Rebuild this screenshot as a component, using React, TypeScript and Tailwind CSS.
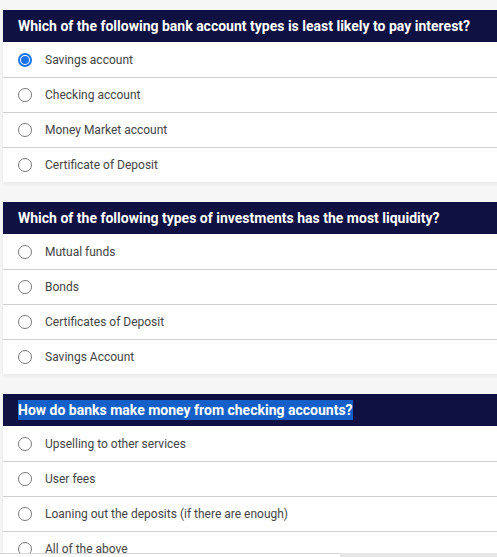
import { useState } from "react"

interface Question {
  id: number
  text: string
  options: string[]
  highlighted?: boolean
}

const questions: Question[] = [
  {
    id: 1,
    text: "Which of the following bank account types is least likely to pay interest?",
    options: ["Savings account", "Checking account", "Money Market account", "Certificate of Deposit"],
  },
  {
    id: 2,
    text: "Which of the following types of investments has the most liquidity?",
    options: ["Mutual funds", "Bonds", "Certificates of Deposit", "Savings Account"],
  },
  {
    id: 3,
    text: "How do banks make money from checking accounts?",
    options: ["Upselling to other services", "User fees", "Loaning out the deposits (if there are enough)", "All of the above"],
    highlighted: true,
  },
]

function Radio({ checked }: { checked: boolean }) {
  return checked ? (
    <span className="w-[14px] h-[14px] rounded-full border-2 border-[#1a73e8] flex items-center justify-center">
      <span className="w-[8px] h-[8px] rounded-full bg-[#1a73e8]" />
    </span>
  ) : (
    <span className="w-[14px] h-[14px] rounded-full border border-[#7a7a7a] bg-white" />
  )
}

export default function App() {
  const [answers, setAnswers] = useState<Record<number, number>>({ 1: 0 })

  return (
    <div
      className="min-h-[557px] bg-[#f6f6f6] pl-[3px] pt-[10px] flex flex-col gap-[20px] overflow-hidden"
      style={{ fontFamily: "Roboto, 'Liberation Sans', sans-serif" }}
    >
      {questions.map((q) => (
        <div key={q.id} className="bg-white shadow-[0_2px_4px_rgba(0,0,0,0.06)] w-[520px]">
          <div className="h-[32px] bg-[#0e1142] flex items-center pl-[15px]">
            <span
              className={`text-[14px] font-bold text-white leading-[20px] ${q.highlighted ? "bg-[#1560c8]" : ""}`}
            >
              {q.text}
            </span>
          </div>
          {q.options.map((opt, i) => (
            <div
              key={opt}
              onClick={() => setAnswers({ ...answers, [q.id]: i })}
              className={`h-[35px] flex items-center pl-[15px] cursor-pointer ${i > 0 ? "border-t border-[#cfcfcf]" : ""}`}
            >
              <Radio checked={answers[q.id] === i} />
              <span className="ml-[13px] text-[12px] text-[#444444]">{opt}</span>
            </div>
          ))}
        </div>
      ))}
      <div className="fixed bottom-0 left-0 right-0 h-[4px] flex">
        <div className="w-[340px] bg-white border-t border-[#d4d4d4]" />
        <div className="flex-1 bg-[#e6e6e6]" />
      </div>
    </div>
  )
}
